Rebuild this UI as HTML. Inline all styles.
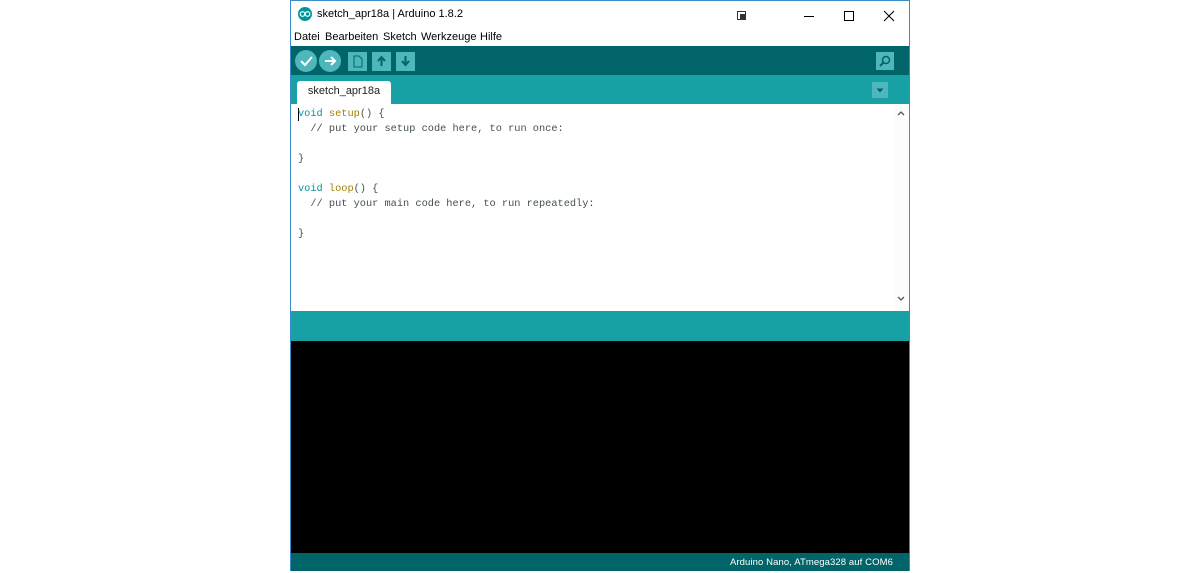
<!DOCTYPE html>
<html><head><style>
*{margin:0;padding:0;box-sizing:border-box}
body{width:1200px;height:572px;background:#fff;position:relative;overflow:hidden;font-family:"Liberation Sans",sans-serif}
.win{position:absolute;left:290px;top:0;width:620px;height:571px;border:1px solid #3c8cc8;background:#fff}
.abs{position:absolute}
.title{left:26px;top:7px;font-size:11px;color:#000}
.menu{top:30px;font-size:11px;color:#000}
.tb{left:0;top:45px;width:618px;height:29px;background:#006468}
.tabbar{left:0;top:74px;width:618px;height:29px;background:#17a1a5}
.btnc{width:22px;height:22px;border-radius:50%;background:#4db7bb;top:49px}
.btns{width:19px;height:19px;background:#4db7bb;top:51px}
.tab{left:6px;top:80px;width:94px;height:24px;background:#fff;border-radius:3px 3px 0 0;font-size:11px;color:#222;text-align:center;line-height:21px}
.editor{left:0;top:103px;width:618px;height:207px;background:#fff}
pre{position:absolute;left:7px;top:106px;font-family:"Liberation Mono",monospace;font-size:10.3px;line-height:15px;color:#434f54}
.kw{color:#00979c}.fn{color:#a08000}
.strip{left:0;top:310px;width:618px;height:30px;background:#17a1a5}
.con{left:0;top:340px;width:618px;height:212px;background:#000}
.status{left:0;top:552px;width:618px;height:18px;background:#006468;color:#fff;font-size:9.5px;text-align:right;padding-right:16px;line-height:20px;letter-spacing:.1px}
</style></head><body>
<div class="win">
<svg class="abs" style="left:7px;top:6px" width="14" height="14"><circle cx="7" cy="7" r="7" fill="#00979c"/><circle cx="4.5" cy="7" r="2.3" fill="none" stroke="#fff" stroke-width="1.2"/><circle cx="9.5" cy="7" r="2.3" fill="none" stroke="#fff" stroke-width="1.2"/></svg>
<div class="abs title">sketch_apr18a | Arduino 1.8.2</div>
<svg class="abs" style="left:440px;top:8px" width="170" height="14" viewBox="290 0 170 14">
<rect x="296.5" y="2.5" width="8" height="8" fill="none" stroke="#333"/><rect x="299" y="5" width="5" height="5" fill="#333"/>
<line x1="363" y1="7.5" x2="373" y2="7.5" stroke="#000"/>
<rect x="403.5" y="2.5" width="9" height="9" fill="none" stroke="#000"/>
<path d="M443 2L453 12M453 2L443 12" stroke="#000"/>
</svg>
<div class="abs menu" style="left:3px">Datei</div>
<div class="abs menu" style="left:34px">Bearbeiten</div>
<div class="abs menu" style="left:92px">Sketch</div>
<div class="abs menu" style="left:130px">Werkzeuge</div>
<div class="abs menu" style="left:189px">Hilfe</div>
<div class="abs tb"></div>
<div class="abs btnc" style="left:4px"></div>
<div class="abs btnc" style="left:28px"></div>
<svg class="abs" style="left:4px;top:49px" width="48" height="22"><path d="M6 11l4 4 7-8" stroke="#fff" stroke-width="2" fill="none"/><path d="M30 11h10M36 7l4 4-4 4" stroke="#fff" stroke-width="2" fill="none"/></svg>
<div class="abs btns" style="left:57px"></div>
<div class="abs btns" style="left:81px"></div>
<div class="abs btns" style="left:105px"></div>
<svg class="abs" style="left:57px;top:51px" width="70" height="19"><path d="M6 4h5l3 3v8H6z" fill="none" stroke="#006468"/><path d="M33.5 14V7M30 9l3.5-4 3.5 4" stroke="#006468" stroke-width="2" fill="none"/><path d="M57.5 4v7M54 9l3.5 4 3.5-4" stroke="#006468" stroke-width="2" fill="none"/></svg>
<div class="abs" style="left:585px;top:51px;width:18px;height:18px;background:#4db7bb"></div>
<svg class="abs" style="left:585px;top:51px" width="18" height="18"><circle cx="10" cy="8" r="3.5" fill="none" stroke="#006468" stroke-width="1.5"/><path d="M7.5 10.5L4 14" stroke="#006468" stroke-width="2"/></svg>
<div class="abs tabbar"></div>
<div class="abs tab">sketch_apr18a</div>
<div class="abs" style="left:581px;top:81px;width:16px;height:16px;background:#4db7bb"></div>
<svg class="abs" style="left:581px;top:81px" width="16" height="16"><path d="M4.5 6.5h7l-3.5 4z" fill="#006468"/></svg>
<div class="abs editor"></div>
<div class="abs" style="left:7px;top:107px;width:1px;height:13px;background:#000"></div>
<pre><span class="kw">void</span> <span class="fn">setup</span>() {
  // put your setup code here, to run once:

}

<span class="kw">void</span> <span class="fn">loop</span>() {
  // put your main code here, to run repeatedly:

}</pre>
<div class="abs" style="left:604px;top:103px;width:14px;height:207px;background:#fcfcfc"></div>
<svg class="abs" style="left:604px;top:106px" width="12" height="200"><path d="M3 8l3-3 3 3" stroke="#555" fill="none" stroke-width="1.3"/><path d="M3 190l3 3 3-3" stroke="#555" fill="none" stroke-width="1.3"/></svg>
<div class="abs strip"></div>
<div class="abs con"></div>
<div class="abs status">Arduino Nano, ATmega328 auf COM6</div>
</div>
</body></html>
